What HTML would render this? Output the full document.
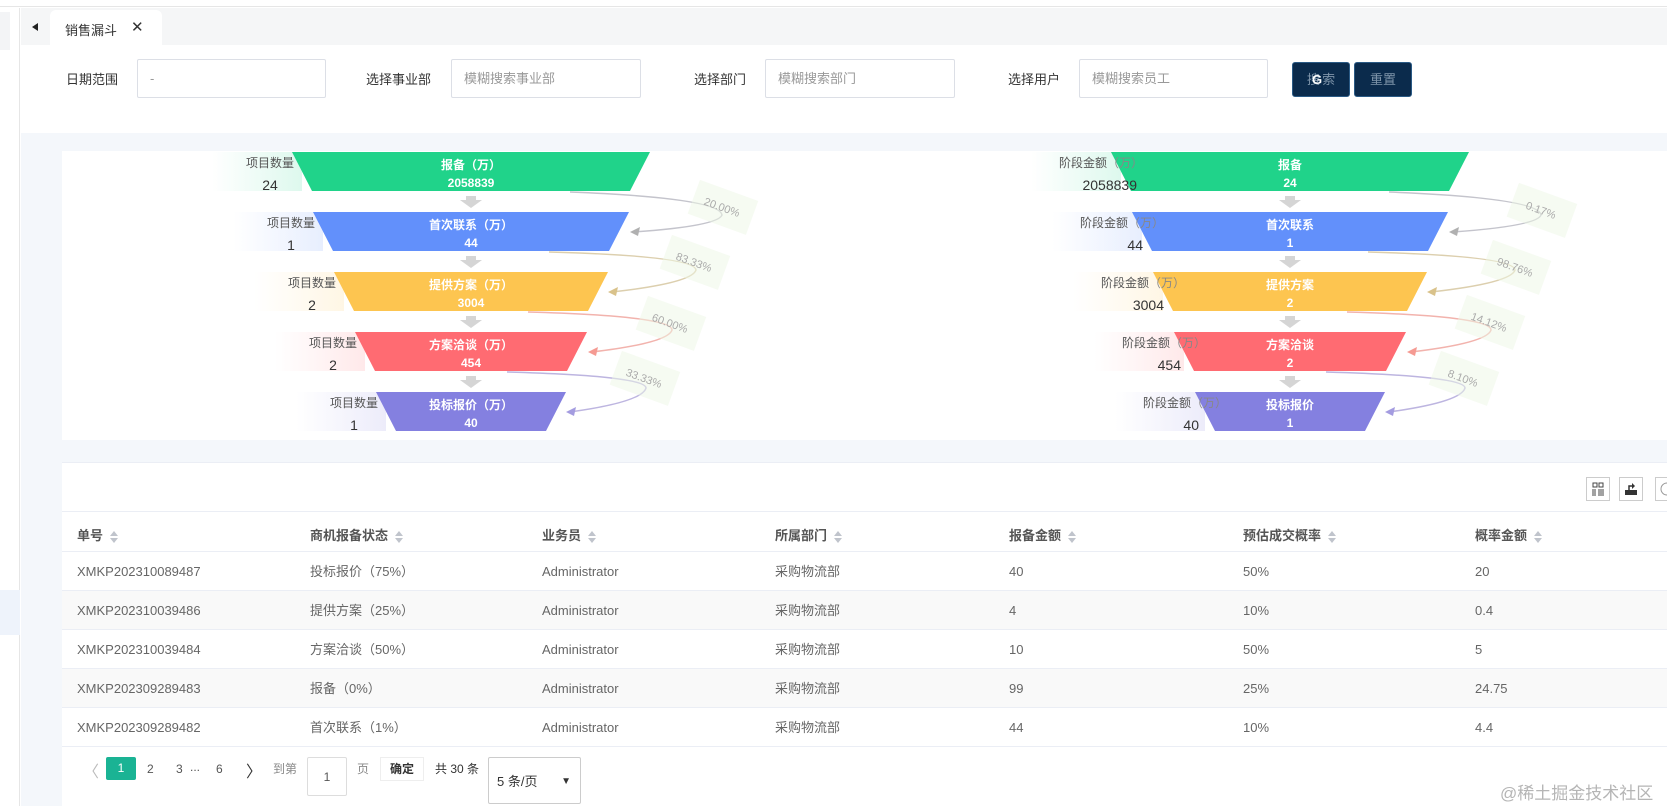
<!DOCTYPE html>
<html><head><meta charset="utf-8">
<style>
*{margin:0;padding:0;box-sizing:border-box}
body{width:1667px;height:806px;overflow:hidden;background:#fff;font-family:"Liberation Sans","Noto Sans CJK SC",sans-serif;font-size:13px;color:#676a6c;position:relative}
.a{position:absolute}
.inp{position:absolute;border:1px solid #dcdfe6;border-radius:2px;background:#fff;height:39px;top:59px;font-size:13px;color:#999;line-height:37px;padding-left:12px}
.lbl{position:absolute;top:69px;font-size:13px;color:#333}
.btn{position:absolute;top:62px;height:35px;background:#0b2b4c;border:1px solid #2a5a85;border-radius:3px;color:#7f95aa;font-size:13px;line-height:33px;text-align:center}
.th{position:absolute;top:525px;font-size:13px;font-weight:bold;color:#555}
.srt{display:inline-block;vertical-align:middle;margin-left:7px;width:8px;height:12px;position:relative}
.srt:before{content:"";position:absolute;left:0;top:0;border:4px solid transparent;border-bottom:5px solid #c0c4cc;border-top:0}
.srt:after{content:"";position:absolute;left:0;top:7px;border:4px solid transparent;border-top:5px solid #c0c4cc;border-bottom:0}
.row{position:absolute;left:62px;width:1605px;height:39px;border-bottom:1px solid #ebeef5}
.td{position:absolute;font-size:13px;color:#666;line-height:39px}
.ic{position:absolute;top:477px;width:24px;height:24px;border:1px solid #ccc;background:#fff}
.pg{position:absolute;font-size:12px;color:#555}
</style></head><body>
<div class="a" style="left:0;top:0;width:1667px;height:7px;background:#fff;border-bottom:1px solid #e6e6e6"></div>
<div class="a" style="left:0;top:8px;width:20px;height:798px;background:#fff;border-right:1px solid #e6e6e6"></div>
<div class="a" style="left:0;top:12px;width:10px;height:38px;background:#f3f4f6"></div>
<div class="a" style="left:0;top:590px;width:20px;height:45px;background:#eef3fb"></div>
<div class="a" style="left:21px;top:133px;width:1646px;height:673px;background:#f4f7fb"></div>
<div class="a" style="left:21px;top:8px;width:1646px;height:37px;background:#f5f6f7"></div>
<div class="a" style="left:50px;top:10px;width:112px;height:35px;background:#fff;border-radius:6px 6px 0 0"></div>
<div class="a" style="left:32px;top:23px;width:0;height:0;border:4px solid transparent;border-right:6px solid #222;border-left:0"></div>
<div class="a" style="left:65px;top:20px;font-size:13px;color:#333">销售漏斗</div>
<div class="a" style="left:131px;top:18px;font-size:15px;color:#333">✕</div>
<div class="lbl" style="left:66px">日期范围</div>
<div class="inp" style="left:137px;width:189px">-</div>
<div class="lbl" style="left:366px">选择事业部</div>
<div class="inp" style="left:451px;width:190px">模糊搜索事业部</div>
<div class="lbl" style="left:694px">选择部门</div>
<div class="inp" style="left:765px;width:190px">模糊搜索部门</div>
<div class="lbl" style="left:1008px">选择用户</div>
<div class="inp" style="left:1079px;width:189px">模糊搜索员工</div>
<div class="btn" style="left:1292px;width:58px">搜<b style="color:#fff;margin-left:-8px">G</b>索</div>
<div class="btn" style="left:1354px;width:58px">重置</div>
<div class="a" style="left:62px;top:151px;width:1605px;height:289px;background:#fff"></div>
<svg class="a" style="left:0;top:0" width="1667" height="806" font-family="Liberation Sans,Noto Sans CJK SC,sans-serif">
<defs>
<linearGradient id="g0" x1="0" x2="1"><stop offset="0" stop-color="#20d38a" stop-opacity="0"/><stop offset="1" stop-color="#20d38a" stop-opacity=".15"/></linearGradient>
<linearGradient id="g1" x1="0" x2="1"><stop offset="0" stop-color="#6290fb" stop-opacity="0"/><stop offset="1" stop-color="#6290fb" stop-opacity=".15"/></linearGradient>
<linearGradient id="g2" x1="0" x2="1"><stop offset="0" stop-color="#fdc550" stop-opacity="0"/><stop offset="1" stop-color="#fdc550" stop-opacity=".15"/></linearGradient>
<linearGradient id="g3" x1="0" x2="1"><stop offset="0" stop-color="#ff6b72" stop-opacity="0"/><stop offset="1" stop-color="#ff6b72" stop-opacity=".15"/></linearGradient>
<linearGradient id="g4" x1="0" x2="1"><stop offset="0" stop-color="#8480e0" stop-opacity="0"/><stop offset="1" stop-color="#8480e0" stop-opacity=".15"/></linearGradient>
<g id="chev"><rect x="-5" y="0" width="10" height="4" fill="#d5d5d5"/><polygon points="-11,4 11,4 0,12" fill="#d5d5d5"/></g>
<g id="glow">
<rect x="212" y="152" width="90" height="39" fill="url(#g0)"/>
<rect x="233" y="212" width="90" height="39" fill="url(#g1)"/>
<rect x="254" y="272" width="90" height="39" fill="url(#g2)"/>
<rect x="275" y="332" width="90" height="39" fill="url(#g3)"/>
<rect x="296" y="392" width="90" height="39" fill="url(#g4)"/>
</g>
<g id="shapes">
<polygon points="292,152 650,152 630,191 312,191" fill="#20d38a"/>
<polygon points="313,212 629,212 609,251 333,251" fill="#6290fb"/>
<polygon points="334,272 608,272 588,311 354,311" fill="#fdc550"/>
<polygon points="355,332 587,332 567,371 375,371" fill="#ff6b72"/>
<polygon points="376,392 566,392 546,431 396,431" fill="#8480e0"/>
<use href="#chev" x="471" y="196"/><use href="#chev" x="471" y="256"/><use href="#chev" x="471" y="316"/><use href="#chev" x="471" y="376"/>
<g fill="none" stroke-width="1.5">
<path d="M570,192 Q720,198 722,215 Q718,226 634,232" stroke="#c4c4cc"/>
<path d="M549,252 Q695,256 696,270 Q692,283 612,292" stroke="#dccfae"/>
<path d="M528,312 Q672,316 672,330 Q668,343 592,352" stroke="#f2b3ad"/>
<path d="M507,372 Q646,376 646,388 Q642,402 570,412" stroke="#bdb5e0"/>
</g>
<polygon points="630,232 640,227 638,236" fill="#b0b0b0"/>
<polygon points="608,292 618,287 616,296" fill="#d9c28a"/>
<polygon points="588,352 598,347 596,356" fill="#f59a92"/>
<polygon points="566,412 576,407 574,416" fill="#a49ce0"/>
</g>
</defs>
<g>
<use href="#glow"/><use href="#shapes"/>
<g fill="#fff" font-size="12" font-weight="bold" text-anchor="middle">
<text x="471" y="169">报备（万）</text><text x="471" y="187">2058839</text>
<text x="471" y="229">首次联系（万）</text><text x="471" y="247">44</text>
<text x="471" y="289">提供方案（万）</text><text x="471" y="307">3004</text>
<text x="471" y="349">方案洽谈（万）</text><text x="471" y="367">454</text>
<text x="471" y="409">投标报价（万）</text><text x="471" y="427">40</text>
</g>
<g fill="#555" font-size="12" text-anchor="end">
<text x="294" y="167">项目数量</text><text x="315" y="227">项目数量</text><text x="336" y="287">项目数量</text><text x="357" y="347">项目数量</text><text x="378" y="407">项目数量</text>
</g>
<g fill="#333" font-size="14" text-anchor="middle">
<text x="270" y="190">24</text><text x="291" y="250">1</text><text x="312" y="310">2</text><text x="333" y="370">2</text><text x="354" y="430">1</text>
</g>
<g font-size="11" fill="#aaa" text-anchor="middle">
<g transform="translate(722,207) rotate(20)"><rect x="-30" y="-18" width="62" height="36" fill="#eef7e6" opacity=".5"/><text y="4">20.00%</text></g>
<g transform="translate(694,262) rotate(20)"><rect x="-30" y="-18" width="62" height="36" fill="#eef7e6" opacity=".5"/><text y="4">83.33%</text></g>
<g transform="translate(670,323) rotate(20)"><rect x="-30" y="-18" width="62" height="36" fill="#eef7e6" opacity=".5"/><text y="4">60.00%</text></g>
<g transform="translate(644,378) rotate(20)"><rect x="-30" y="-18" width="62" height="36" fill="#eef7e6" opacity=".5"/><text y="4">33.33%</text></g>
</g>
</g>
<g transform="translate(819,0)">
<use href="#glow"/><use href="#shapes"/>
<g fill="#fff" font-size="12" font-weight="bold" text-anchor="middle">
<text x="471" y="169">报备</text><text x="471" y="187">24</text>
<text x="471" y="229">首次联系</text><text x="471" y="247">1</text>
<text x="471" y="289">提供方案</text><text x="471" y="307">2</text>
<text x="471" y="349">方案洽谈</text><text x="471" y="367">2</text>
<text x="471" y="409">投标报价</text><text x="471" y="427">1</text>
</g>
<g fill="#555" font-size="12" text-anchor="end">
<text x="324" y="167">阶段金额<tspan fill="#888">（万）</tspan></text>
<text x="345" y="227">阶段金额<tspan fill="#888">（万）</tspan></text>
<text x="366" y="287">阶段金额<tspan fill="#888">（万）</tspan></text>
<text x="387" y="347">阶段金额<tspan fill="#888">（万）</tspan></text>
<text x="408" y="407">阶段金额<tspan fill="#888">（万）</tspan></text>
</g>
<g fill="#333" font-size="14" text-anchor="end">
<text x="318" y="190">2058839</text><text x="324" y="250">44</text><text x="345" y="310">3004</text><text x="362" y="370">454</text><text x="380" y="430">40</text>
</g>
<g font-size="11" fill="#aaa" text-anchor="middle">
<g transform="translate(722,210) rotate(20)"><rect x="-30" y="-18" width="62" height="36" fill="#eef7e6" opacity=".5"/><text y="4">0.17%</text></g>
<g transform="translate(696,267) rotate(20)"><rect x="-30" y="-18" width="62" height="36" fill="#eef7e6" opacity=".5"/><text y="4">98.76%</text></g>
<g transform="translate(670,322) rotate(20)"><rect x="-30" y="-18" width="62" height="36" fill="#eef7e6" opacity=".5"/><text y="4">14.12%</text></g>
<g transform="translate(644,378) rotate(20)"><rect x="-30" y="-18" width="62" height="36" fill="#eef7e6" opacity=".5"/><text y="4">8.10%</text></g>
</g>
</g>
</svg>
<div class="a" style="left:62px;top:462px;width:1605px;height:344px;background:#fff;border-top:1px solid #ebeef5"></div>
<div class="ic" style="left:1586px"><svg width="22" height="22"><g fill="none" stroke="#444" stroke-width="1"><rect x="6" y="5" width="4" height="4"/><rect x="12" y="5" width="4" height="4"/><path d="M6 11v7M8 11v7M12 11v7M14 11v7M16 11v7"/></g></svg></div>
<div class="ic" style="left:1619px"><svg width="22" height="22"><path d="M5 12h12v5H5z" fill="#333"/><path d="M9 12V8h4" fill="none" stroke="#333" stroke-width="1.5"/><path d="M12 5l3 3-3 3z" fill="#333"/></svg></div>
<div class="ic" style="left:1655px;width:14px;border-right:0"><svg width="12" height="22"><circle cx="11" cy="11" r="6" fill="none" stroke="#999"/></svg></div>
<div class="a" style="left:62px;top:511px;width:1605px;height:1px;background:#ebeef5"></div>
<div class="th" style="left:77px">单号<span class="srt"></span></div>
<div class="th" style="left:310px">商机报备状态<span class="srt"></span></div>
<div class="th" style="left:542px">业务员<span class="srt"></span></div>
<div class="th" style="left:775px">所属部门<span class="srt"></span></div>
<div class="th" style="left:1009px">报备金额<span class="srt"></span></div>
<div class="th" style="left:1243px">预估成交概率<span class="srt"></span></div>
<div class="th" style="left:1475px">概率金额<span class="srt"></span></div>
<div class="a" style="left:62px;top:551px;width:1605px;height:1px;background:#ebeef5"></div>
<div class="row" style="top:552px"></div>
<div class="row" style="top:591px;background:#f9f9f9"></div>
<div class="row" style="top:630px"></div>
<div class="row" style="top:669px;background:#f9f9f9"></div>
<div class="row" style="top:708px"></div>
<div class="td" style="left:77px;top:552px">XMKP202310089487</div><div class="td" style="left:310px;top:552px">投标报价（75%）</div><div class="td" style="left:542px;top:552px">Administrator</div><div class="td" style="left:775px;top:552px">采购物流部</div><div class="td" style="left:1009px;top:552px">40</div><div class="td" style="left:1243px;top:552px">50%</div><div class="td" style="left:1475px;top:552px">20</div>
<div class="td" style="left:77px;top:591px">XMKP202310039486</div><div class="td" style="left:310px;top:591px">提供方案（25%）</div><div class="td" style="left:542px;top:591px">Administrator</div><div class="td" style="left:775px;top:591px">采购物流部</div><div class="td" style="left:1009px;top:591px">4</div><div class="td" style="left:1243px;top:591px">10%</div><div class="td" style="left:1475px;top:591px">0.4</div>
<div class="td" style="left:77px;top:630px">XMKP202310039484</div><div class="td" style="left:310px;top:630px">方案洽谈（50%）</div><div class="td" style="left:542px;top:630px">Administrator</div><div class="td" style="left:775px;top:630px">采购物流部</div><div class="td" style="left:1009px;top:630px">10</div><div class="td" style="left:1243px;top:630px">50%</div><div class="td" style="left:1475px;top:630px">5</div>
<div class="td" style="left:77px;top:669px">XMKP202309289483</div><div class="td" style="left:310px;top:669px">报备（0%）</div><div class="td" style="left:542px;top:669px">Administrator</div><div class="td" style="left:775px;top:669px">采购物流部</div><div class="td" style="left:1009px;top:669px">99</div><div class="td" style="left:1243px;top:669px">25%</div><div class="td" style="left:1475px;top:669px">24.75</div>
<div class="td" style="left:77px;top:708px">XMKP202309289482</div><div class="td" style="left:310px;top:708px">首次联系（1%）</div><div class="td" style="left:542px;top:708px">Administrator</div><div class="td" style="left:775px;top:708px">采购物流部</div><div class="td" style="left:1009px;top:708px">44</div><div class="td" style="left:1243px;top:708px">10%</div><div class="td" style="left:1475px;top:708px">4.4</div>
<div class="pg" style="left:83px;top:758px;font-size:16px;color:#bbb">〈</div>
<div class="a" style="left:106px;top:757px;width:30px;height:23px;background:#1ab394;border-radius:2px;color:#fff;font-size:12px;text-align:center;line-height:23px">1</div>
<div class="pg" style="left:147px;top:762px">2</div>
<div class="pg" style="left:176px;top:762px">3</div>
<div class="pg" style="left:190px;top:760px">...</div>
<div class="pg" style="left:216px;top:762px">6</div>
<div class="pg" style="left:246px;top:758px;font-size:16px;color:#333">〉</div>
<div class="pg" style="left:273px;top:760px;color:#888">到第</div>
<div class="a" style="left:307px;top:757px;width:40px;height:39px;border:1px solid #ddd;border-radius:2px;text-align:center;line-height:39px;font-size:12px;color:#555">1</div>
<div class="pg" style="left:357px;top:760px;color:#888">页</div>
<div class="a" style="left:380px;top:757px;width:44px;height:24px;border:1px solid #eee;font-size:12px;font-weight:bold;color:#333;text-align:center;line-height:22px">确定</div>
<div class="pg" style="left:435px;top:760px;color:#333">共 30 条</div>
<div class="a" style="left:488px;top:757px;width:93px;height:47px;border:1px solid #ccc;border-radius:2px;font-size:13px;color:#333;line-height:47px;padding-left:8px">5 条/页<span style="position:absolute;right:9px;top:0;font-size:10px">&#9660;</span></div>
<div class="a" style="left:1500px;top:779px;font-size:17px;color:#b5b5b5">@稀土掘金技术社区</div>
</body></html>
